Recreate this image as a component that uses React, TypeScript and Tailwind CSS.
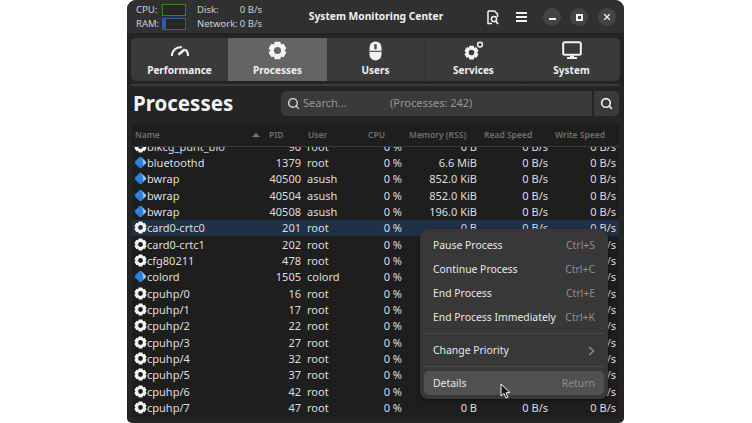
import { Search, X } from 'lucide-react'

const font = { fontFamily: '"Noto Sans", sans-serif' }

function Gear({ size = 12, className = '' }: { size?: number; className?: string }) {
  return (
    <svg width={size} height={size} viewBox="0 0 24 24" className={className}>
      {[0, 60, 120, 180, 240, 300].map((a) => (
        <rect key={a} x="8" y="1" width="8" height="6" rx="1.2" fill="currentColor" transform={`rotate(${a} 12 12)`} />
      ))}
      <circle cx="12" cy="12" r="6.9" fill="none" stroke="currentColor" strokeWidth="4.8" />
    </svg>
  )
}

function AppIcon() {
  return (
    <svg width="13" height="13" viewBox="0 0 16 16" className="shrink-0">
      <rect x="2.4" y="2.4" width="11.2" height="11.2" rx="2.4" fill="#2f7fdc" transform="rotate(45 8 8)" />
      <path d="M8.6 1.6 L14.6 7.4 Q15.2 8 14.6 8.6 L11 12 C12 8.5 11 4.5 8.6 1.6Z" fill="#9ccaf5" />
    </svg>
  )
}

function Gauge() {
  return (
    <svg width="20" height="16" viewBox="0 0 20 16" fill="none" stroke="#f2f2f2" strokeWidth="2">
      <path d="M2 13 A8.5 8.5 0 0 1 12 4.3" />
      <path d="M15.5 6.5 A8.5 8.5 0 0 1 18 13" />
      <path d="M9.2 11 L14 7" strokeWidth="2.6" strokeLinecap="round" />
    </svg>
  )
}

function Mouse() {
  return (
    <svg width="13" height="20" viewBox="0 0 13 20">
      <rect x="0.5" y="0.5" width="12" height="19" rx="6" fill="#f2f2f2" />
      <rect x="5.2" y="3" width="2.6" height="5.5" rx="1.3" fill="#555" />
      <rect x="0.5" y="9.8" width="12" height="1.2" fill="#555" />
    </svg>
  )
}

function Services() {
  return (
    <svg width="20" height="20" viewBox="0 0 20 20" className="text-[#f2f2f2]">
      <g transform="translate(0 4)">
        <Gear size={15} />
      </g>
      <circle cx="16" cy="3.6" r="2.4" fill="none" stroke="currentColor" strokeWidth="1.5" />
    </svg>
  )
}

function Monitor() {
  return (
    <svg width="20" height="19" viewBox="0 0 20 19" fill="none">
      <rect x="1.2" y="1.2" width="17.6" height="12.6" rx="1.5" stroke="#f2f2f2" strokeWidth="2" />
      <path d="M8 14.5 V16 H12 V14.5Z" fill="#f2f2f2" />
      <rect x="5" y="16" width="10" height="2" rx="0.6" fill="#f2f2f2" />
    </svg>
  )
}

function DocSearch() {
  return (
    <svg width="12" height="15" viewBox="0 0 12 15" fill="none">
      <path d="M1 1 H7.5 L10.5 4 V7" stroke="#f2f2f2" strokeWidth="1.5" />
      <path d="M1 1 V13.5 H5" stroke="#f2f2f2" strokeWidth="1.5" />
      <circle cx="7" cy="9" r="2.6" stroke="#f2f2f2" strokeWidth="1.5" />
      <path d="M8.8 11 L11 14" stroke="#f2f2f2" strokeWidth="1.8" />
    </svg>
  )
}

function Hamburger() {
  return (
    <svg width="11" height="10" viewBox="0 0 11 10" fill="#f2f2f2">
      <rect y="0" width="11" height="2" />
      <rect y="4" width="11" height="2" />
      <rect y="8" width="11" height="2" />
    </svg>
  )
}

const tabs = [
  { label: 'Performance', icon: <Gauge />, width: 'w-[97px]' },
  { label: 'Processes', icon: <Gear size={19} className="text-[#f2f2f2]" />, width: 'w-[99px]', active: true },
  { label: 'Users', icon: <Mouse />, width: 'w-[97px]' },
  { label: 'Services', icon: <Services />, width: 'w-[98px]' },
  { label: 'System', icon: <Monitor />, width: 'w-[98px]' },
]

const rows: [string, string, string, string, string, string, string, string][] = [
  ['gear', 'blkcg_punt_bio', '90', 'root', '0 %', '0 B', '0 B/s', '0 B/s'],
  ['app', 'bluetoothd', '1379', 'root', '0 %', '6.6 MiB', '0 B/s', '0 B/s'],
  ['app', 'bwrap', '40500', 'asush', '0 %', '852.0 KiB', '0 B/s', '0 B/s'],
  ['app', 'bwrap', '40504', 'asush', '0 %', '852.0 KiB', '0 B/s', '0 B/s'],
  ['app', 'bwrap', '40508', 'asush', '0 %', '196.0 KiB', '0 B/s', '0 B/s'],
  ['gear', 'card0-crtc0', '201', 'root', '0 %', '0 B', '0 B/s', '0 B/s'],
  ['gear', 'card0-crtc1', '202', 'root', '0 %', '0 B', '0 B/s', '0 B/s'],
  ['gear', 'cfg80211', '478', 'root', '0 %', '0 B', '0 B/s', '0 B/s'],
  ['app', 'colord', '1505', 'colord', '0 %', '0 B', '0 B/s', '0 B/s'],
  ['gear', 'cpuhp/0', '16', 'root', '0 %', '0 B', '0 B/s', '0 B/s'],
  ['gear', 'cpuhp/1', '17', 'root', '0 %', '0 B', '0 B/s', '0 B/s'],
  ['gear', 'cpuhp/2', '22', 'root', '0 %', '0 B', '0 B/s', '0 B/s'],
  ['gear', 'cpuhp/3', '27', 'root', '0 %', '0 B', '0 B/s', '0 B/s'],
  ['gear', 'cpuhp/4', '32', 'root', '0 %', '0 B', '0 B/s', '0 B/s'],
  ['gear', 'cpuhp/5', '37', 'root', '0 %', '0 B', '0 B/s', '0 B/s'],
  ['gear', 'cpuhp/6', '42', 'root', '0 %', '0 B', '0 B/s', '0 B/s'],
  ['gear', 'cpuhp/7', '47', 'root', '0 %', '0 B', '0 B/s', '0 B/s'],
]

const cols = 'grid grid-cols-[130px_39px_54px_47px_75px_71px_68px]'

function MenuItem({ label, keys, hover }: { label: string; keys?: string; hover?: boolean }) {
  return (
    <div className={`flex h-[24px] items-center justify-between rounded-[5px] pt-[1px] pr-[9px] pl-[9px] ${hover ? 'bg-[#505050]' : ''}`}>
      <span className="text-[#e8e8e8]">{label}</span>
      {keys && <span className="text-[#8f8f8f]">{keys}</span>}
    </div>
  )
}

function App() {
  return (
    <div className="flex h-[423px] w-[752px] overflow-hidden bg-white pl-[127px]" style={font}>
      <div className="relative flex h-[423px] w-[497px] flex-col overflow-hidden rounded-t-[9px] rounded-b-[5px] bg-[#242424]">
        {/* titlebar */}
        <div className="relative flex h-[33px] shrink-0 items-center bg-[#303030] pt-[1px] pr-[8px] pl-[9px] text-[9.5px] text-[#d0d0d0]">
          <div className="flex w-[61px] flex-col gap-[1px] pr-[11px]">
            <div className="flex h-[13px] items-center justify-between">
              <span>CPU:</span>
              <div className="h-[12px] w-[24px] border border-[#3f7f1f] bg-[#262626]" />
            </div>
            <div className="flex h-[13px] items-center justify-between">
              <span>RAM:</span>
              <div className="h-[12px] w-[24px] border border-[#2e5aa8] bg-[#262626]">
                <div className="h-full w-[3px] bg-[#2e5aa8]" />
              </div>
            </div>
          </div>
          <div className="flex w-[65px] flex-col gap-[1px] whitespace-nowrap">
            <div className="flex h-[13px] items-center justify-between">
              <span>Disk:</span>
              <span>0 B/s</span>
            </div>
            <div className="flex h-[13px] items-center justify-between">
              <span>Network:</span>
              <span>0 B/s</span>
            </div>
          </div>
          <div className="absolute top-0 left-0 flex h-[33px] w-[498px] items-center justify-center text-[10.25px] font-bold text-[#f0f0f0]">
            System Monitoring Center
          </div>
          <div className="relative ml-auto flex items-center text-[#f2f2f2]">
            <div className="mr-[17px]"><DocSearch /></div>
            <div className="mr-[16px]"><Hamburger /></div>
            <div className="mr-[9px] flex size-[18px] items-center justify-center rounded-full bg-[#444444]">
              <div className="mt-[4px] h-[2px] w-[7px] bg-[#f2f2f2]" />
            </div>
            <div className="mr-[10px] flex size-[18px] items-center justify-center rounded-full bg-[#444444]">
              <div className="size-[7px] border-[2px] border-[#f2f2f2]" />
            </div>
            <div className="flex size-[18px] items-center justify-center rounded-full bg-[#444444]">
              <X size={10} strokeWidth={3} />
            </div>
          </div>
        </div>

        {/* tabs */}
        <div className="mx-[4px] mt-[5px] flex h-[43px] shrink-0 overflow-hidden rounded-[5px] bg-[#3a3a3a]">
          {tabs.map((t, i) => (
            <div
              key={t.label}
              className={`flex flex-col items-center ${t.width} ${t.active ? 'bg-[#646464]' : ''} ${i > 2 ? 'border-l border-[#333333]' : ''}`}
            >
              <div className="flex h-[25px] items-center text-[#f2f2f2]">{t.icon}</div>
              <span className="text-[10px] leading-[14px] font-bold text-[#f0f0f0]">{t.label}</span>
            </div>
          ))}
        </div>
        <div className="mx-[4px] mt-[3px] h-[2px] shrink-0 bg-[#3a3a3a]" />

        {/* heading + search */}
        <div className="mt-[5px] flex h-[25px] shrink-0 items-center pr-[5px] pl-[6px]">
          <h1 className="w-[148px] text-[20.5px] leading-none font-bold text-[#f4f4f4]">Processes</h1>
          <div className="flex h-[25px] w-[311px] items-center rounded-l-[5px] bg-[#3a3a3a] pl-[6px] text-[11px] text-[#979797]">
            <Search size={13} strokeWidth={2.6} className="text-[#d8d8d8]" />
            <span className="ml-[3px] w-[87px]">Search...</span>
            <span>(Processes: 242)</span>
          </div>
          <div className="ml-[2px] flex h-[25px] w-[25px] items-center justify-center rounded-r-[5px] bg-[#3a3a3a] text-[#f2f2f2]">
            <Search size={13} strokeWidth={3} />
          </div>
        </div>

        {/* table */}
        <div className="mx-[5px] mt-[9px] flex h-[292px] shrink-0 flex-col overflow-hidden bg-[#1e1e1e]">
          <div className={`${cols} relative z-10 h-[22px] shrink-0 items-center border-b border-[#3a3a3a] bg-[#1e1e1e] text-[8.5px] font-semibold text-[#6f6f6f]`}>
            <div className="relative pl-[3px]">
              Name
              <div className="absolute top-[4px] right-[2px] size-0 border-x-[4px] border-b-[4px] border-x-transparent border-b-[#7a7a7a]" />
            </div>
            <div className="pl-[7px]">PID</div>
            <div className="pl-[7px]">User</div>
            <div className="pl-[13px]">CPU</div>
            <div className="pl-[7px] whitespace-nowrap">Memory (RSS)</div>
            <div className="pl-[7px] whitespace-nowrap">Read Speed</div>
            <div className="pl-[7px] whitespace-nowrap">Write Speed</div>
          </div>
          <div className="-mt-[9px] text-[11px] text-[#dedede]">
            {rows.map((r, i) => (
              <div key={i} className={`${cols} h-[16.33px] items-center leading-none ${i === 5 ? 'bg-[#1f3147]' : ''}`}>
                <div className="flex items-center pl-[2px]">
                  {r[0] === 'gear' ? <Gear size={13} className="shrink-0 text-[#f4f4f4]" /> : <AppIcon />}
                  <span>{r[1]}</span>
                </div>
                <div className="text-right">{r[2]}</div>
                <div className="pl-[6px]">{r[3]}</div>
                <div className="text-right">{r[4]}</div>
                <div className="text-right">{r[5]}</div>
                <div className="text-right">{r[6]}</div>
                <div className="text-right">{r[7]}</div>
              </div>
            ))}
          </div>
        </div>

        {/* context menu */}
        <div className="absolute top-[229px] left-[293px] w-[188px] rounded-[8px] bg-[#383838] p-[4px] text-[10.4px] shadow-[0_1px_4px_rgba(0,0,0,0.5)]">
          <div className="flex flex-col">
            <MenuItem label="Pause Process" keys="Ctrl+S" />
            <MenuItem label="Continue Process" keys="Ctrl+C" />
            <MenuItem label="End Process" keys="Ctrl+E" />
            <MenuItem label="End Process Immediately" keys="Ctrl+K" />
          </div>
          <div className="my-[4px] h-px bg-[#4a4a4a]" />
          <div className="flex h-[24px] items-center justify-between pt-[1px] pr-[9px] pl-[9px]">
            <span className="text-[#e8e8e8]">Change Priority</span>
            <svg width="7" height="10" viewBox="0 0 7 10" fill="none" stroke="#8f8f8f" strokeWidth="1.3">
              <path d="M1 1 L5.5 5 L1 9" />
            </svg>
          </div>
          <div className="my-[4px] h-px bg-[#4a4a4a]" />
          <MenuItem label="Details" keys="Return" hover />
        </div>

        {/* mouse pointer */}
        <svg width="11" height="16" viewBox="0 0 11 16" className="absolute top-[383px] left-[373px]">
          <path d="M1 1 V13 L4 10.5 L6 15 L8 14 L6 9.8 L10 9.5 Z" fill="#1a1a1a" stroke="#f2f2f2" strokeWidth="1" />
        </svg>
      </div>
    </div>
  )
}

export default App
